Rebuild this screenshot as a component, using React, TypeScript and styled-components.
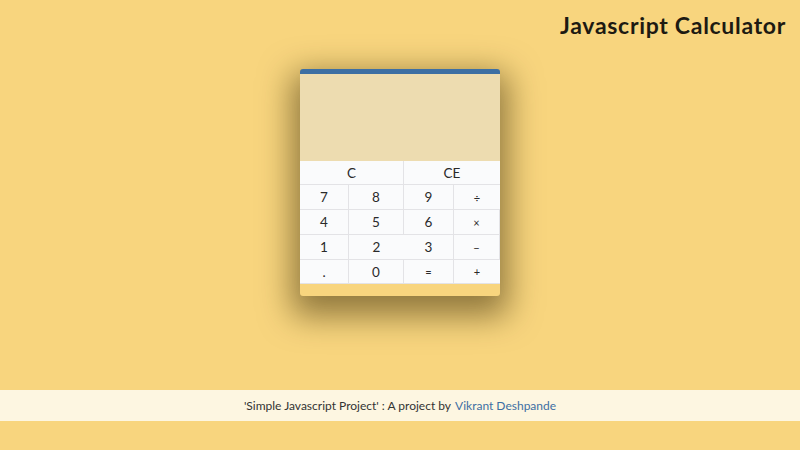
import React from 'react';
import styled, { createGlobalStyle } from 'styled-components';

const GlobalStyle = createGlobalStyle`
  html, body {
    margin: 0;
    padding: 0;
    background: #f8d57e;
    font-family: Lato, "Open Sans", sans-serif;
  }
`;

const Page = styled.div`
  width: 800px;
  height: 450px;
  display: flex;
  flex-direction: column;
  overflow: hidden;
`;

const Header = styled.header`
  display: flex;
  justify-content: flex-end;
  padding: 11px 14px 0 0;
  height: 58px;
  box-sizing: border-box;
`;

const Title = styled.h1`
  margin: 0;
  font-size: 23px;
  font-weight: 700;
  letter-spacing: 0.7px;
  color: #1d1a12;
`;

const Main = styled.main`
  display: flex;
  justify-content: center;
  padding-top: 11px;
  height: 332px;
  box-sizing: border-box;
`;

const Card = styled.div`
  width: 200px;
  height: 227px;
  border-radius: 3px;
  overflow: hidden;
  background: #f8d57e;
  border-top: 5px solid #3d6fa3;
  box-sizing: border-box;
  box-shadow: 0 12px 32px 8px rgba(60, 45, 10, 0.55);
  display: flex;
  flex-direction: column;
`;

const Display = styled.div`
  height: 87px;
  background: #eddcb0;
`;

const Keys = styled.div`
  display: grid;
  grid-template-columns: 49px 55px 50px 46px;
  grid-template-rows: 24px 25px 25px 25px 24px;
  background: #fafbfc;
`;

const Key = styled.button<{ $span?: number; $small?: boolean }>`
  grid-column: span ${(p) => p.$span ?? 1};
  border: none;
  border-right: 1px solid #e3e3e6;
  border-bottom: 1px solid #e3e3e6;
  background: #fafbfc;
  font-family: Lato, "Open Sans", sans-serif;
  font-size: ${(p) => (p.$small ? '11px' : '13.5px')};
  color: #2a2a2a;
  padding: 0;
  cursor: pointer;
  &:nth-child(2),
  &:nth-child(6n) {
    border-right: none;
  }
`;

const Footer = styled.footer`
  height: 31px;
  background: #fdf6e1;
  display: flex;
  align-items: center;
  justify-content: center;
  font-size: 12px;
  color: #333;
`;

const FooterLink = styled.a`
  color: #3d6fa3;
  text-decoration: none;
  margin-left: 4px;
`;

const rows: { label: string; small?: boolean }[][] = [
  [{ label: '7' }, { label: '8' }, { label: '9' }, { label: '÷', small: true }],
  [{ label: '4' }, { label: '5' }, { label: '6' }, { label: '×', small: true }],
  [{ label: '1' }, { label: '2' }, { label: '3' }, { label: '−', small: true }],
  [{ label: '.' }, { label: '0' }, { label: '=', small: true }, { label: '+', small: true }],
];

export default function App() {
  return (
    <>
      <GlobalStyle />
      <Page>
        <Header>
          <Title>Javascript Calculator</Title>
        </Header>
        <Main>
          <Card>
            <Display />
            <Keys>
              <Key $span={2}>C</Key>
              <Key $span={2}>CE</Key>
              {rows.flat().map((k, i) => (
                <Key key={i} $small={k.small}>
                  {k.label}
                </Key>
              ))}
            </Keys>
          </Card>
        </Main>
        <Footer>
          'Simple Javascript Project' : A project by
          <FooterLink href="#">Vikrant Deshpande</FooterLink>
        </Footer>
      </Page>
    </>
  );
}
